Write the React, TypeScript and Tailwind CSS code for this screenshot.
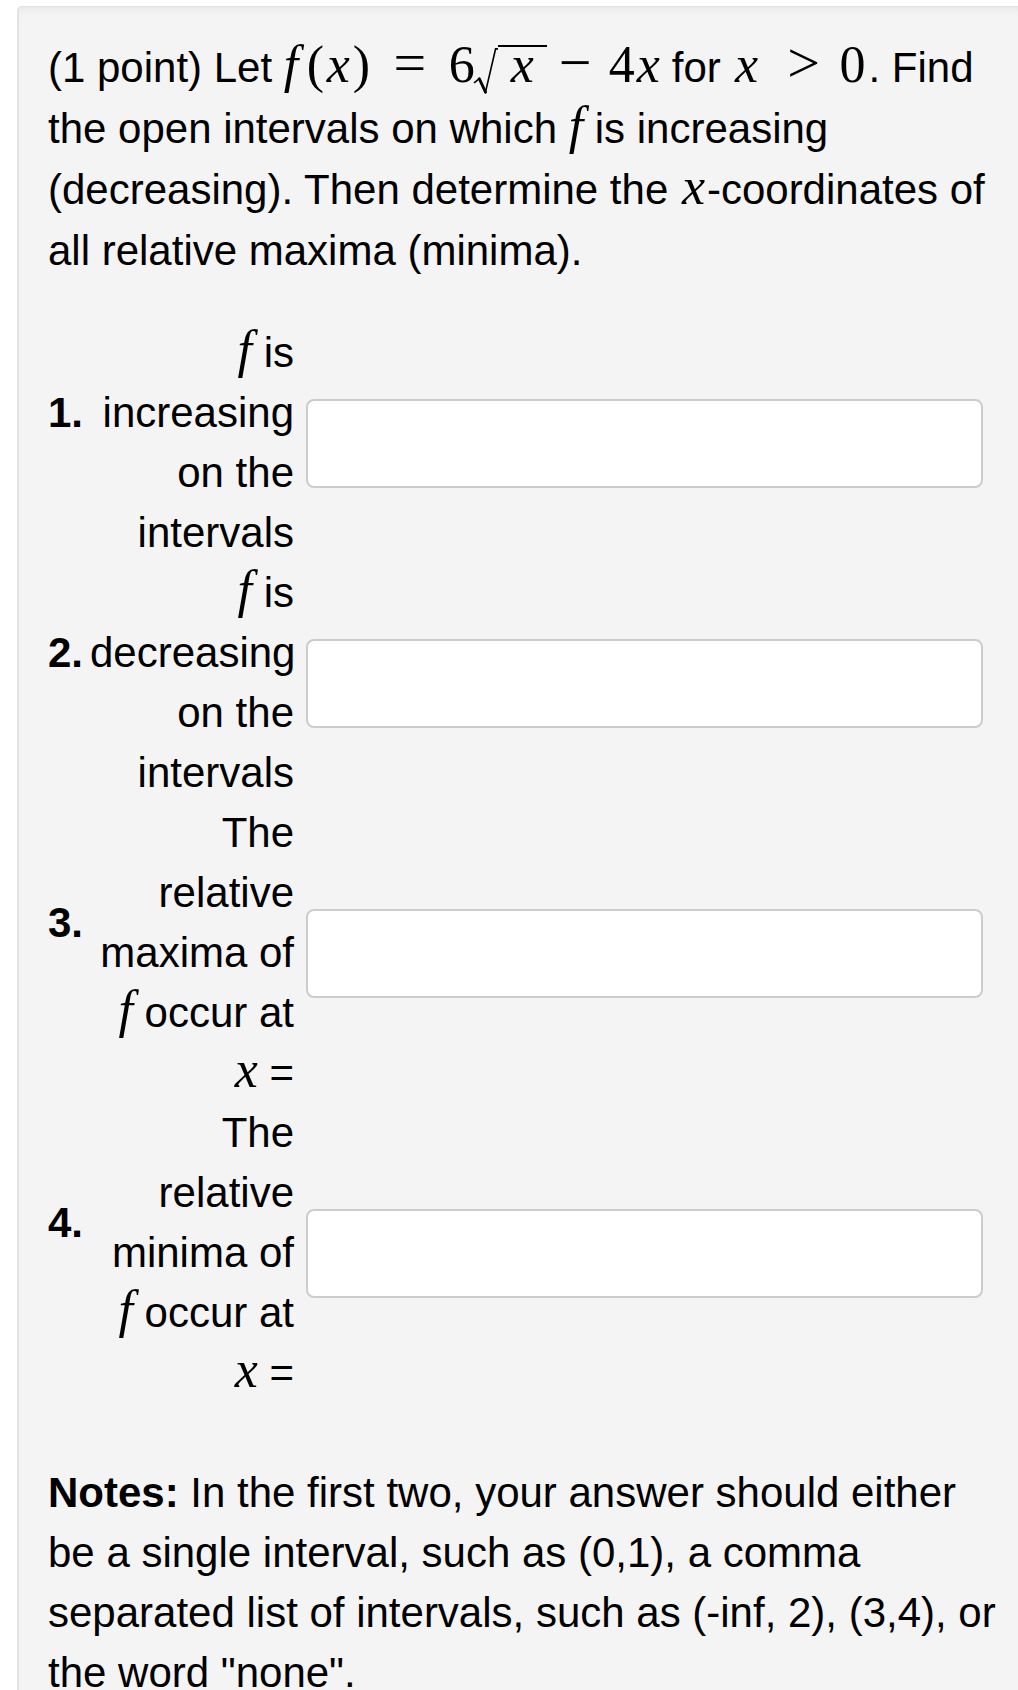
import React from "react";

const SF = "font-['Liberation_Serif',serif] text-[52px]";
const SERIF = `${SF} leading-[50px]`;

const M = ({ children }: { children: React.ReactNode }) => (
  <span className={`${SERIF} italic`}>{children}</span>
);

function Row({ num, lines }: { num: string; lines: React.ReactNode[] }) {
  return (
    <div className="flex items-center">
      <div className="w-[42px] font-bold pb-[60px] leading-[60px]">{num}</div>
      <div className="w-[204px] text-right">
        {lines.map((l, i) => (
          <div key={i} className="whitespace-nowrap h-[60px] leading-[60px]">
            {l}
          </div>
        ))}
      </div>
      <div className="flex-1 ml-[12px]">
        <input
          type="text"
          aria-label={`answer ${num}`}
          className="block w-full h-[89px] bg-white border-2 border-[#cccccc] rounded-[8px] outline-none"
        />
      </div>
    </div>
  );
}

export default function App() {
  return (
    <div className="min-h-[1690px] bg-white pt-[6px] font-['Liberation_Sans',Arial,sans-serif] text-black text-[42px]">
      <div className="ml-[17px] min-h-[1684px] rounded-tl-[5px] border-l-2 border-t border-[#e2e2e2] bg-[#f4f4f4] shadow-[inset_0_10px_10px_-8px_rgba(0,0,0,0.06)] pl-[29px] pr-[35px] pt-[30px]">
        <div className="leading-[61px]">
          <div className="whitespace-nowrap h-[61px]">
            (1 point) Let{" "}
            <span className={`${SERIF} inline-block w-[16px] italic`}>f</span>
            <span className={`${SERIF} inline-block ml-[6px] w-[19px] text-center`}>(</span>
            <span className={`${SERIF} inline-block w-[27px] text-center italic`}>x</span>
            <span className={`${SERIF} inline-block w-[19px] text-center`}>)</span>
            <span className={`${SERIF} inline-block ml-[19px] w-[40px] text-center text-[58px]`}>=</span>
            <span className={`${SERIF} inline-block ml-[19px] w-[24px] text-center`}>6</span>
            <svg
              viewBox="0 0 26 48"
              className="inline-block w-[25px] h-[48px] align-[-13px]"
              fill="none"
              stroke="black"
              strokeLinecap="round"
            >
              <path d="M1.5 36 L6.5 32" strokeWidth="1.6" />
              <path d="M6.5 32 L13 46" strokeWidth="3" />
              <path d="M13 46 L23.5 1 L26 1" strokeWidth="1.7" />
            </svg>
            <span
              className={`${SF} inline-block w-[49px] leading-[0.7] border-t-2 border-black text-center italic`}
            >
              x
            </span>
            <span className={`${SERIF} inline-block ml-[12px] w-[32px] text-center text-[58px]`}>−</span>
            <span className={`${SERIF} inline-block ml-[18px] w-[26px] text-center`}>4</span>
            <span className={`${SERIF} inline-block w-[27px] text-center italic`}>x</span>
            <span className="ml-[10px]">for </span>
            <span className={`${SERIF} inline-block w-[28px] text-center italic`}>x</span>
            <span className={`${SERIF} inline-block ml-[25px] w-[36px] text-center text-[58px]`}>&gt;</span>
            <span className={`${SERIF} inline-block ml-[18px] w-[26px] text-center`}>0</span>
            <span className="ml-[3px]">. Find</span>
          </div>
          <div className="whitespace-nowrap h-[61px]">
            the open intervals on which <M>f</M> is increasing
          </div>
          <div className="whitespace-nowrap h-[61px]">
            (decreasing). Then determine the{" "}
            <span className={`${SERIF} inline-block w-[27px] text-center italic`}>x</span>
            -coordinates of
          </div>
          <div className="whitespace-nowrap h-[61px]">all relative maxima (minima).</div>
        </div>

        <div className="mt-[42px]">
          <Row
            num="1."
            lines={[
              <>
                <M>f</M> is
              </>,
              "increasing",
              "on the",
              "intervals",
            ]}
          />
          <Row
            num="2."
            lines={[
              <>
                <M>f</M> is
              </>,
              "decreasing",
              "on the",
              "intervals",
            ]}
          />
          <Row
            num="3."
            lines={[
              "The",
              "relative",
              "maxima of",
              <>
                <M>f</M> occur at
              </>,
              <>
                <M>x</M> =
              </>,
            ]}
          />
          <Row
            num="4."
            lines={[
              "The",
              "relative",
              "minima of",
              <>
                <M>f</M> occur at
              </>,
              <>
                <M>x</M> =
              </>,
            ]}
          />
        </div>

        <div className="mt-[60px] leading-[60px]">
          <div className="whitespace-nowrap h-[60px]">
            <b>Notes:</b> In the first two, your answer should either
          </div>
          <div className="whitespace-nowrap h-[60px]">
            be a single interval, such as (0,1), a comma
          </div>
          <div className="whitespace-nowrap h-[60px]">
            separated list of intervals, such as (-inf, 2), (3,4), or
          </div>
          <div className="whitespace-nowrap h-[60px]">the word "none".</div>
        </div>
      </div>
    </div>
  );
}
